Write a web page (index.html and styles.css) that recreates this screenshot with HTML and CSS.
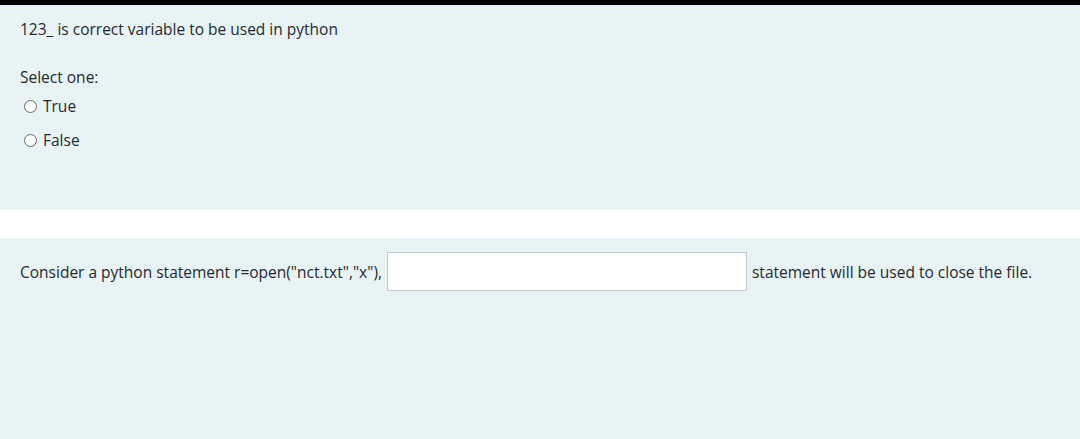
FILE: index.html
```html
<!DOCTYPE html>
<html>
<head>
<meta charset="utf-8">
<link rel="stylesheet" href="styles.css">
</head>
<body>
<div class="topbar"></div>
<section class="que first">
  <div class="qtext">123_ is correct variable to be used in python</div>
  <div class="prompt">Select one:</div>
  <div class="answer">
    <label class="opt"><span class="radio"></span>True</label>
    <label class="opt"><span class="radio"></span>False</label>
  </div>
</section>
<div class="gap"></div>
<section class="que second">
  <div class="fill">
    <span>Consider a python statement r=open("nct.txt","x"),</span>
    <span class="box"></span>
    <span>statement will be used to close the file.</span>
  </div>
</section>
</body>
</html>
```
FILE: styles.css
```css
html, body { margin: 0; padding: 0; }
body {
  width: 1080px;
  height: 439px;
  overflow: hidden;
  background: #ffffff;
  font-family: "Open Sans", "Noto Sans", sans-serif;
  font-size: 15.5px;
  color: #262a2e;
}
.topbar { height: 5px; background: #000; }
.que { background: #e7f3f5; padding: 0 20px; box-sizing: border-box; }
.first { height: 205px; padding-top: 14px; }
.gap { height: 28px; background: #fff; }
.second { height: 201px; padding-top: 14px; }
.qtext { line-height: 20px; }
.prompt { margin-top: 28px; line-height: 20px; }
.answer { display: flex; flex-direction: column; gap: 14px; margin-top: 9px; padding-left: 4px; }
.opt { display: flex; align-items: center; gap: 6px; line-height: 20px; }
.radio {
  width: 13px; height: 13px; box-sizing: border-box;
  border: 1.5px solid #666; border-radius: 50%;
  background: #fff; display: inline-block;
}
.fill { display: flex; align-items: center; gap: 5px; }
.box {
  width: 358px; height: 37px; background: #fff; border: 1px solid #c4c9cc;
  display: inline-block;
}
```
